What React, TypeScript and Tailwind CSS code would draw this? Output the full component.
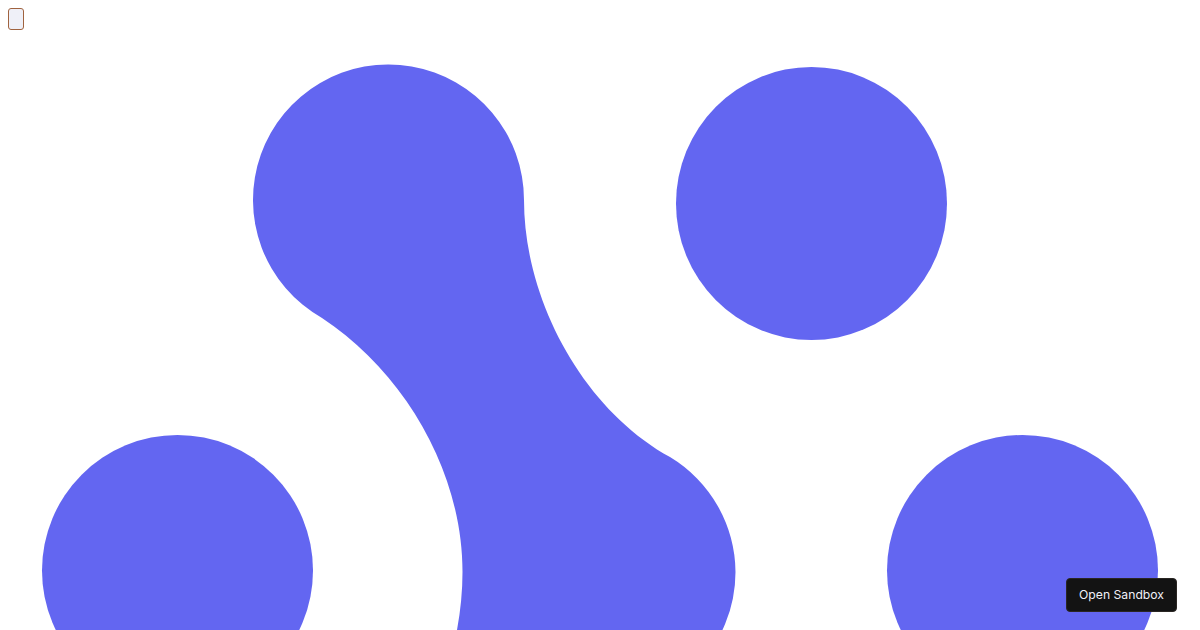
export default function App() {
  return (
    <div className="relative h-[630px] w-full overflow-hidden bg-white">
      <svg viewBox="0 0 1200 630" className="block h-full w-full" fill="#6366f1">
        <ellipse cx="811.5" cy="203.5" rx="135.5" ry="136.5" />
        <circle cx="177.5" cy="570.5" r="135.5" />
        <circle cx="1022.5" cy="570.5" r="135.5" />
        <path d="M524 200 C524 300 583 409 670 457 A135.5 135.5 0 0 1 735.5 572 A135.5 135.5 0 0 1 600 707.5 L445 707 L457 630 Q462.5 600 462.5 572 C462.5 472 405 373 322 318 A135.5 135.5 0 1 1 524 200 Z" />
      </svg>

      <button className="absolute left-2 top-2 h-[22px] w-4 rounded-[3px] border border-[#a0633f] bg-[#eff0f8]" />

      <button className="absolute bottom-[18px] right-[23px] flex h-[34px] w-[111px] items-center justify-center rounded-[4px] border border-[#2a2623] bg-[#131313] font-['Inter',sans-serif] text-[12.2px] text-[#f0f0f8]">
        Open Sandbox
      </button>
    </div>
  )
}
